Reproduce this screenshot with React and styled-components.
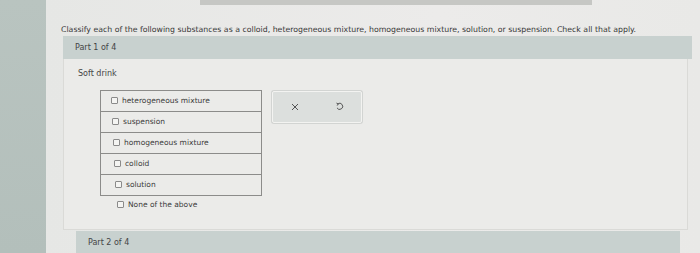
import React from 'react';
import styled, { createGlobalStyle } from 'styled-components';

const GlobalStyle = createGlobalStyle`
  body {
    margin: 0;
    background: #e8e8e6;
    font-family: "DejaVu Sans", Verdana, sans-serif;
    color: #3a3a3a;
  }
`;

const Page = styled.div`
  display: flex;
  width: 700px;
  height: 253px;
  overflow: hidden;
`;

const SideStrip = styled.div`
  width: 46px;
  flex-shrink: 0;
  background: linear-gradient(180deg, #b9c4c0 0%, #b3bfbb 100%);
`;

const Main = styled.div`
  flex: 1;
  display: flex;
  flex-direction: column;
  background: linear-gradient(90deg, #e6e7e5 0%, #ecebea 60%, #e9e9e7 100%);
`;

const TopBar = styled.div`
  height: 5px;
  width: 392px;
  margin-left: 154px;
  background: #c6c7c4;
`;

const Question = styled.p`
  margin: 20px 0 0 15px;
  font-size: 7.8px;
  color: #383838;
  white-space: nowrap;
`;

const PartBar = styled.div`
  display: flex;
  align-items: center;
  height: ${(p) => p.h}px;
  margin: ${(p) => p.m};
  padding-left: 12px;
  background: #c8d1cf;
  font-size: 8px;
  color: #444;
`;

const Panel = styled.div`
  margin: 0 12px 0 17px;
  height: 172px;
  padding: 10px 0 0 14px;
  box-sizing: border-box;
  border: 1px solid #dadad7;
  border-top: none;
  background: #ebebe9;
`;

const Label = styled.div`
  font-size: 8px;
  color: #444;
`;

const Row = styled.div`
  display: flex;
  align-items: flex-start;
  gap: 10px;
  margin: 12px 0 0 22px;
`;

const Choices = styled.div`
  display: flex;
  flex-direction: column;
`;

const Table = styled.div`
  width: 160px;
  border: 1px solid #8c8c8a;
  display: flex;
  flex-direction: column;
`;

const Choice = styled.label`
  display: flex;
  align-items: center;
  gap: 4px;
  height: 20px;
  padding-left: ${(p) => p.indent}px;
  font-size: 7.5px;
  color: #3b3b3b;
  border-top: ${(p) => (p.first ? 'none' : '1px solid #8c8c8a')};
`;

const Plain = styled(Choice)`
  border: none;
  height: 18px;
  padding-left: 17px;
`;

const Box = styled.span`
  width: 5px;
  height: 5px;
  border: 1px solid #8a8a8a;
  border-radius: 1px;
  background: #f4f4f2;
  flex-shrink: 0;
`;

const Actions = styled.div`
  display: flex;
  align-items: center;
  justify-content: space-around;
  width: 88px;
  height: 30px;
  margin-top: 1px;
  background: #dcdfdd;
  border: 1px solid #f3f3f1;
  border-radius: 2px;
  box-shadow: 0 0 0 1px #d2d4d2;
`;

const IconBtn = styled.span`
  display: flex;
  width: 12px;
  height: 12px;
  align-items: center;
  justify-content: center;
`;

const items = [
  'heterogeneous mixture',
  'suspension',
  'homogeneous mixture',
  'colloid',
  'solution',
];

export default function App() {
  return (
    <>
      <GlobalStyle />
      <Page>
        <SideStrip />
        <Main>
          <TopBar />
          <Question>
            Classify each of the following substances as a colloid, heterogeneous mixture, homogeneous
            mixture, solution, or suspension. Check all that apply.
          </Question>
          <PartBar h={23} m="2px 8px 0 17px">Part 1 of 4</PartBar>
          <Panel>
            <Label>Soft drink</Label>
            <Row>
              <Choices>
                <Table>
                  {items.map((t, i) => (
                    <Choice key={t} first={i === 0} indent={10 + i}>
                      <Box />
                      {t}
                    </Choice>
                  ))}
                </Table>
                <Plain>
                  <Box />
                  None of the above
                </Plain>
              </Choices>
              <Actions>
                <IconBtn>
                  <svg width="8" height="8" viewBox="0 0 8 8">
                    <path d="M1 1L7 7M7 1L1 7" stroke="#555" strokeWidth="1" />
                  </svg>
                </IconBtn>
                <IconBtn>
                  <svg width="9" height="9" viewBox="0 0 10 10">
                    <path
                      d="M3 2.2A3.4 3.4 0 1 1 2.2 6.5"
                      fill="none"
                      stroke="#555"
                      strokeWidth="1.1"
                    />
                    <path d="M1.6 1.2L3.6 2.2L2.4 4" fill="none" stroke="#555" strokeWidth="1.1" />
                  </svg>
                </IconBtn>
              </Actions>
            </Row>
          </Panel>
          <PartBar h={22} m="1px 20px 0 30px">Part 2 of 4</PartBar>
        </Main>
      </Page>
    </>
  );
}
